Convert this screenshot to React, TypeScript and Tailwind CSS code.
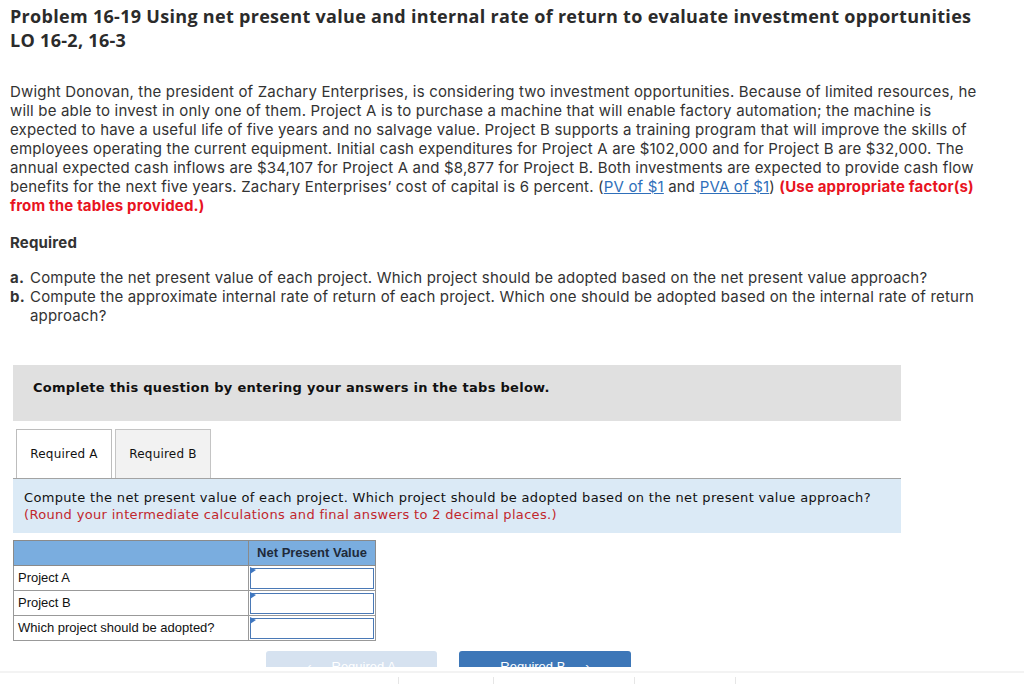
import React from 'react';

const body = '"Inter", "Open Sans", sans-serif';
const heading = '"Open Sans", "Inter", sans-serif';
const verdana = '"DejaVu Sans", Verdana, sans-serif';
const arial = '"Liberation Sans", Arial, sans-serif';

const paragraph = [
  'Dwight Donovan, the president of Zachary Enterprises, is considering two investment opportunities. Because of limited resources, he',
  'will be able to invest in only one of them. Project A is to purchase a machine that will enable factory automation; the machine is',
  'expected to have a useful life of five years and no salvage value. Project B supports a training program that will improve the skills of',
  'employees operating the current equipment. Initial cash expenditures for Project A are $102,000 and for Project B are $32,000. The',
  'annual expected cash inflows are $34,107 for Project A and $8,877 for Project B. Both investments are expected to provide cash flow',
];

const rows = ['Project A', 'Project B', 'Which project should be adopted?'];

const InputCell = () => (
  <td className="relative border border-[#999] p-[1px] h-[25px]">
    <div className="h-[21px] w-full border-[1.5px] border-[#4a79b6] bg-white" />
    <svg className="absolute left-[1px] top-[1px]" width="6" height="7" viewBox="0 0 6 7">
      <polygon points="0,0 6,3 0,7" fill="#3f77c0" />
    </svg>
  </td>
);

export default function App() {
  return (
    <div className="h-[684px] w-[1024px] overflow-hidden bg-white flex flex-col">
      <div className="h-[667px] shrink-0 overflow-hidden px-[10px] pt-[4px] text-[#333]" style={{ fontFamily: body }}>
        <h1 className="text-[18px] leading-[24px] font-bold text-[#2b2b2b] tracking-[0.3px]" style={{ fontFamily: heading }}>
          Problem 16-19 Using net present value and internal rate of return to evaluate investment opportunities
          <br />
          LO 16-2, 16-3
        </h1>

        <div className="mt-[30px] text-[15px] leading-[19px] whitespace-nowrap tracking-[0.18px]">
          {paragraph.map((line) => (
            <div key={line}>{line}</div>
          ))}
          <div>
            benefits for the next five years. Zachary Enterprises’ cost of capital is 6 percent. (
            <span className="text-[#2f6fba] underline">PV of $1</span> and{' '}
            <span className="text-[#2f6fba] underline">PVA of $1</span>){' '}
            <span className="font-bold text-[#e8141f]">(Use appropriate factor(s)</span>
          </div>
          <div className="font-bold text-[#e8141f]">from the tables provided.)</div>
        </div>

        <div className="mt-[18px] text-[15px] leading-[19px] font-bold tracking-[0.18px]">Required</div>

        <div className="mt-[16px] text-[15px] leading-[19px] whitespace-nowrap tracking-[0.18px]">
          <div className="flex">
            <span className="w-[20px] font-bold">a.</span>
            <span>Compute the net present value of each project. Which project should be adopted based on the net present value approach?</span>
          </div>
          <div className="flex">
            <span className="w-[20px] font-bold">b.</span>
            <span>
              Compute the approximate internal rate of return of each project. Which one should be adopted based on the internal rate of return
              <br />
              approach?
            </span>
          </div>
        </div>

        <div className="ml-[3px] w-[888px]">
          <div className="mt-[40px] h-[56px] bg-[#e0e0e0] pl-[20px] pt-[14px]">
            <div className="text-[13px] leading-[18px] font-bold text-[#111] tracking-[0.28px]" style={{ fontFamily: verdana }}>
              Complete this question by entering your answers in the tabs below.
            </div>
          </div>

          <div className="mt-[8px] flex gap-[3px] pl-[3px] border-b border-[#a3a3a3]" style={{ fontFamily: verdana }}>
            <div className="h-[49px] w-[96px] border border-b-0 border-[#bdbdbd] bg-white flex items-center justify-center text-[12px] text-[#111] tracking-[0.2px]">
              Required A
            </div>
            <div className="h-[49px] w-[96px] border border-b-0 border-[#c4c4c4] bg-[#f2f2f2] flex items-center justify-center text-[12px] text-[#111] tracking-[0.2px]">
              Required B
            </div>
          </div>

          <div className="h-[54px] bg-[#dbeaf6] pl-[11px] pt-[10px] text-[13px] leading-[17px] tracking-[0.33px]" style={{ fontFamily: verdana }}>
            <div className="text-[#111]">
              Compute the net present value of each project. Which project should be adopted based on the net present value approach?
            </div>
            <div className="text-[#c1272d]">(Round your intermediate calculations and final answers to 2 decimal places.)</div>
          </div>

          <table className="mt-[7px] border-collapse border border-[#7d7d7d] text-[13px] text-[#111]" style={{ fontFamily: arial }}>
            <thead>
              <tr className="bg-[#7aaddf] h-[25px]">
                <th className="w-[235px] border border-[#8a8a8a]" />
                <th className="w-[127px] border border-[#8a8a8a] text-[13px] font-bold text-[#1e2a3a]">Net Present Value</th>
              </tr>
            </thead>
            <tbody>
              {rows.map((r) => (
                <tr key={r}>
                  <td className="border border-[#999] pl-[4px] h-[25px] leading-[22px]">{r}</td>
                  <InputCell />
                </tr>
              ))}
            </tbody>
          </table>

          <div className="mt-[10px] ml-[253px] flex gap-[22px] text-[13px] text-white" style={{ fontFamily: arial }}>
            <div className="h-[32px] w-[171px] rounded-t-[3px] bg-[#d6e2f0] flex items-center justify-center gap-[20px]">
              <span>&lsaquo;</span>
              <span>Required A</span>
            </div>
            <div className="h-[32px] w-[172px] rounded-t-[3px] bg-[#3d77b8] flex items-center justify-center gap-[20px]">
              <span>Required B</span>
              <span>&rsaquo;</span>
            </div>
          </div>
        </div>
      </div>

      <div className="flex-1 bg-white pt-[4px]">
        <div className="h-[2px] bg-[#f3f3f3]" />
        <div className="mt-[4px] flex h-[8px]">
          <div className="w-[398px]" />
          <div className="w-[95px] border-l border-[#e6e6e6]" />
          <div className="w-[141px] border-l border-[#e6e6e6]" />
          <div className="w-[101px] border-l border-[#e6e6e6]" />
          <div className="border-l border-[#e6e6e6]" />
        </div>
      </div>
    </div>
  );
}
